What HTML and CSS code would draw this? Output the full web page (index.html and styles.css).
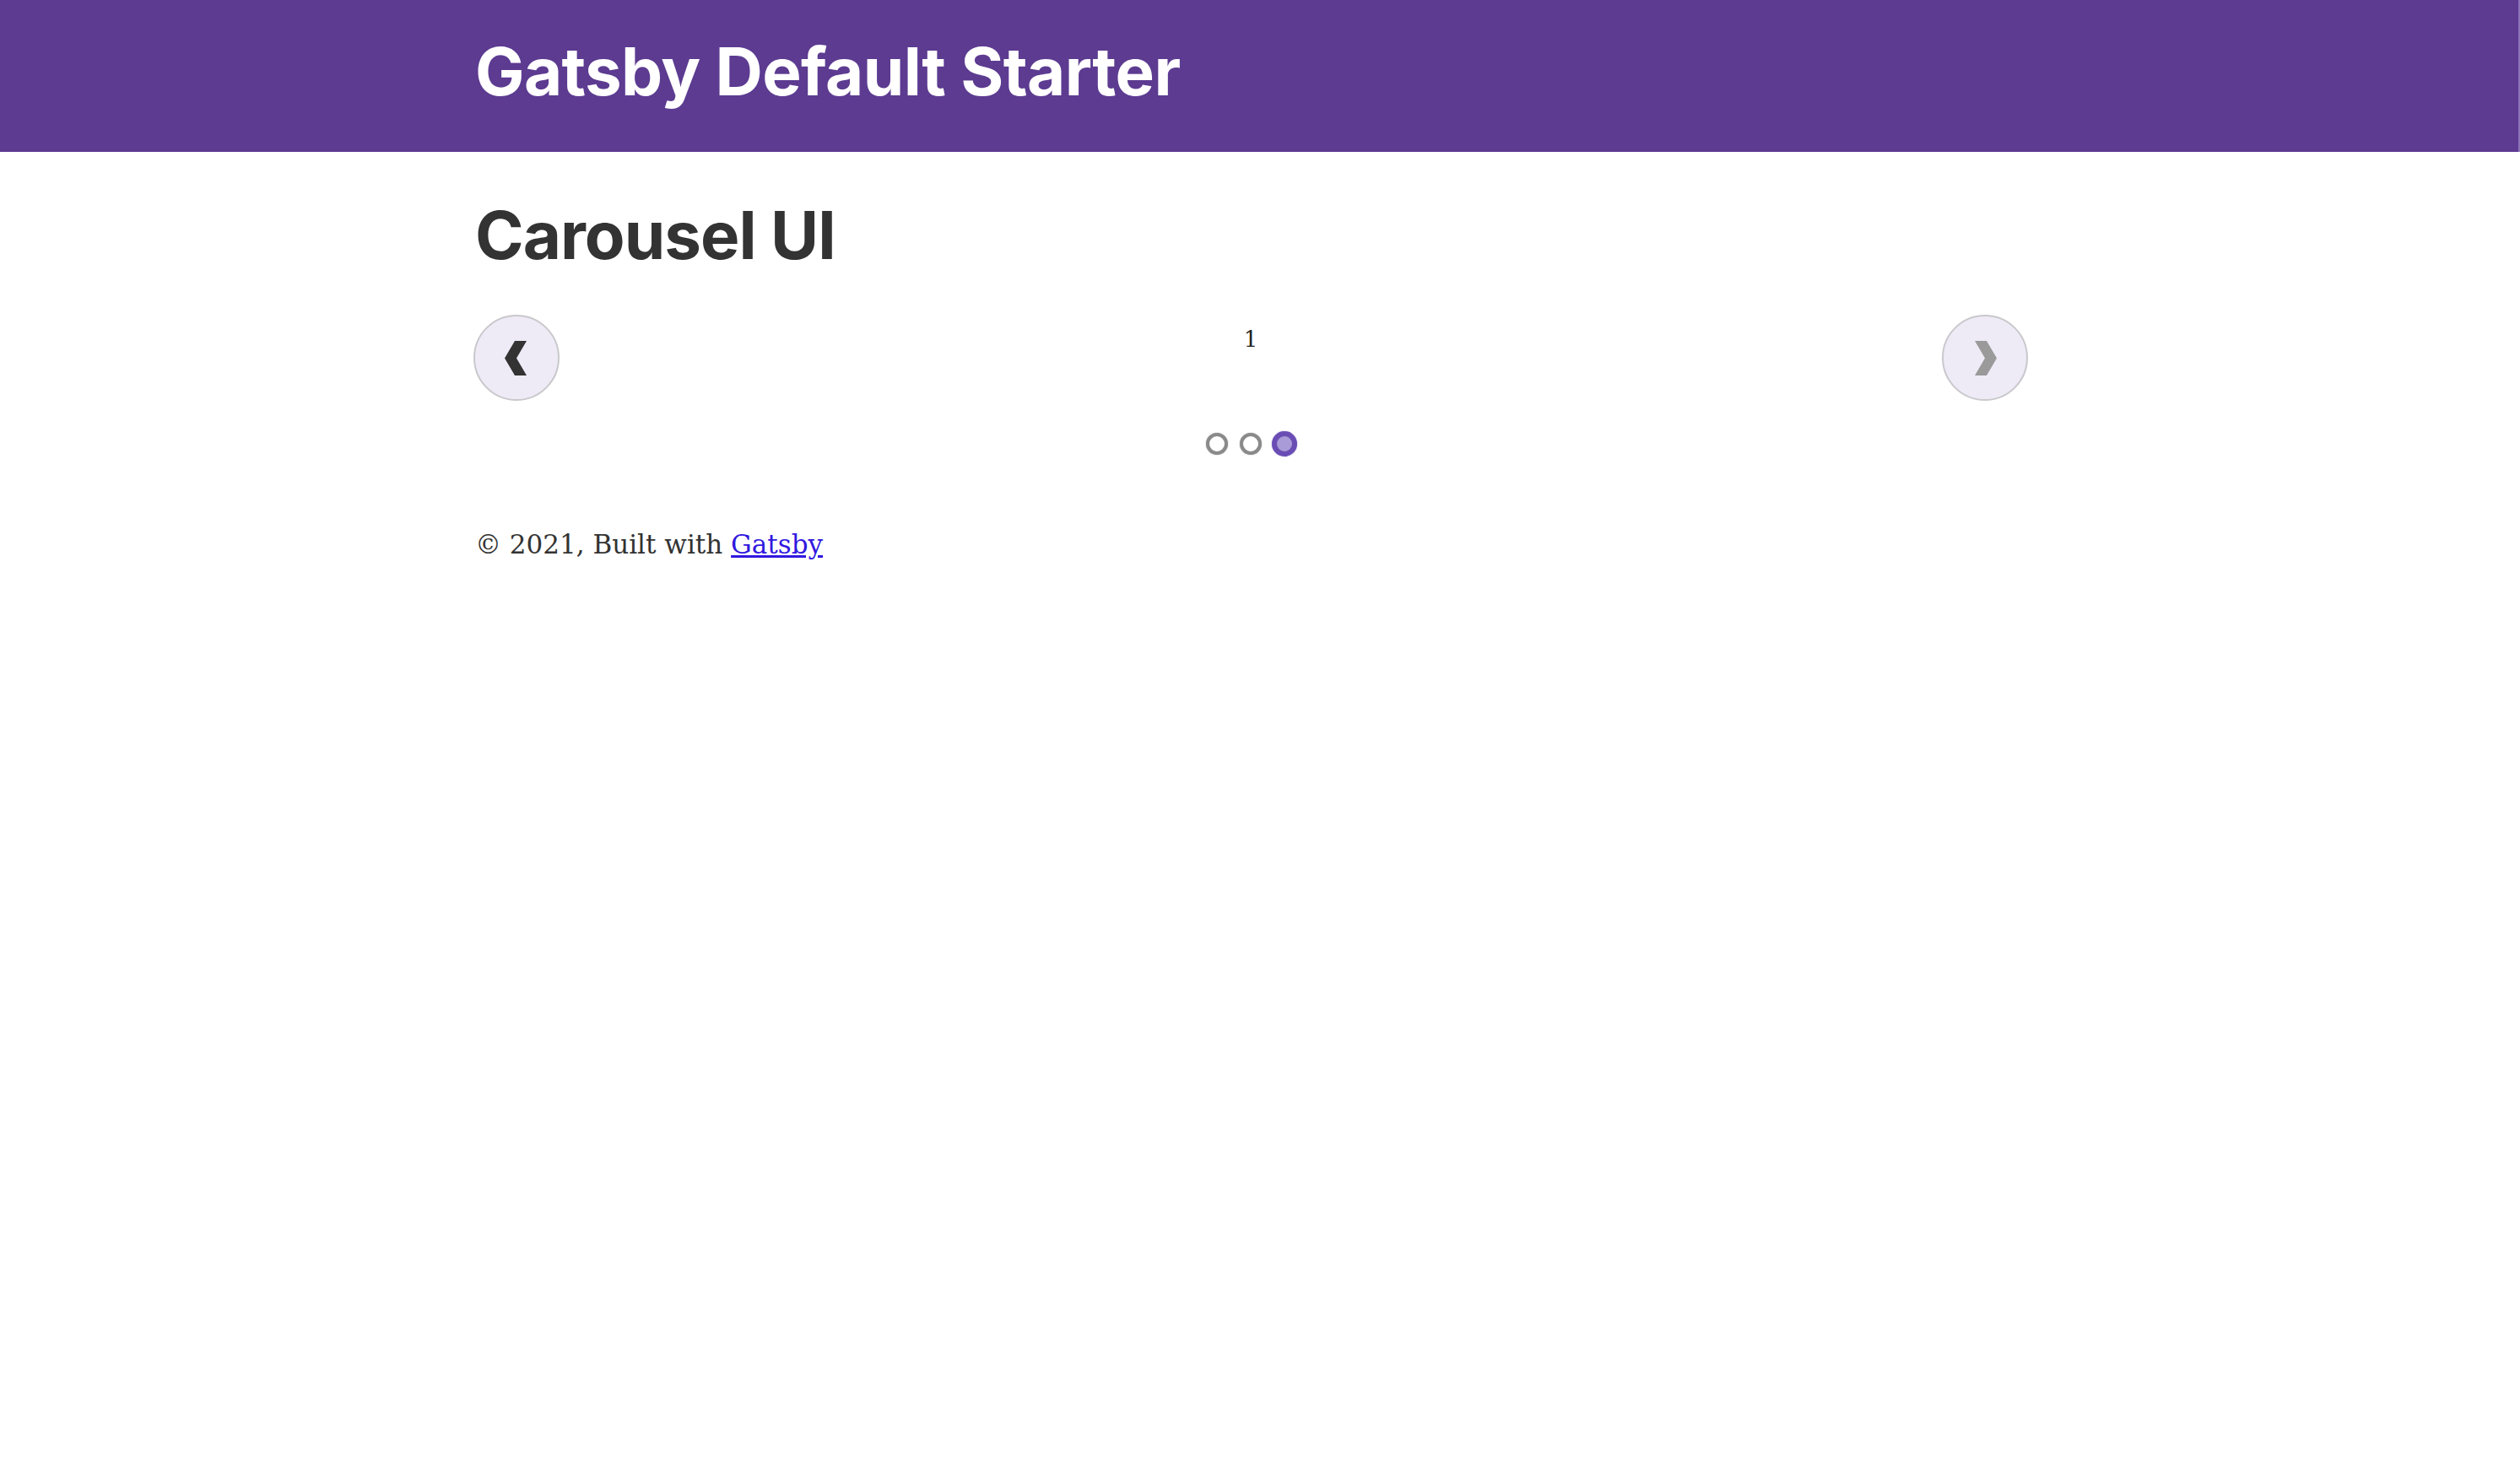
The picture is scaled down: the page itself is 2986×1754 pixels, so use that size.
FILE: index.html
```html
<!DOCTYPE html>
<html lang="en">
<head>
<meta charset="utf-8">
<title>Gatsby Default Starter</title>
<link rel="stylesheet" href="styles.css">
</head>
<body>
<header class="site-header">
  <div class="container">
    <h1 class="site-title">Gatsby Default Starter</h1>
  </div>
</header>
<div class="container">
  <main>
    <h1 class="page-title">Carousel UI</h1>
    <div class="carousel">
      <button class="nav-btn nav-prev" type="button" aria-label="Previous">
        <svg class="chev" viewBox="0 0 26 41" width="26" height="41"><polygon points="0,20.5 12,0 26,0 14,20.5 26,41 12,41"/></svg>
      </button>
      <div class="slide">1</div>
      <button class="nav-btn nav-next" type="button" aria-label="Next">
        <svg class="chev" viewBox="0 0 26 41" width="26" height="41"><polygon points="26,20.5 14,0 0,0 12,20.5 0,41 14,41"/></svg>
      </button>
    </div>
    <div class="dots">
      <span class="slot"><span class="dot"></span></span>
      <span class="slot"><span class="dot"></span></span>
      <span class="slot"><span class="dot dot-active"></span></span>
    </div>
  </main>
  <footer class="site-footer">© 2021, Built with <a href="#">Gatsby</a></footer>
</div>
</body>
</html>
```
FILE: styles.css
```css
html, body {
  margin: 0;
  padding: 0;
  background: #ffffff;
}
body {
  font-family: "DejaVu Serif", "Liberation Serif", serif;
  color: #333333;
}
.container {
  width: 1842px;
  margin-left: 561px;
}
.site-header {
  box-sizing: border-box;
  height: 180px;
  padding-top: 46px;
  background: #5c3b91;
  border-right: 2px solid #8d74b8;
}
.site-title {
  margin: 0 0 0 2px;
  font-family: Inter, "Liberation Sans", sans-serif;
  font-weight: 700;
  font-size: 78px;
  line-height: 78px;
  color: #ffffff;
  letter-spacing: -0.6px;
}
.page-title {
  margin: 60px 0 0 2px;
  font-family: Inter, "Liberation Sans", sans-serif;
  font-weight: 700;
  font-size: 78px;
  line-height: 78px;
  color: #333333;
  letter-spacing: -1px;
}
.carousel {
  display: flex;
  align-items: flex-start;
  margin-top: 55px;
  height: 102px;
}
.nav-btn {
  box-sizing: border-box;
  width: 102px;
  height: 102px;
  flex: 0 0 102px;
  border-radius: 50%;
  border: 2px solid #c9c8cc;
  background: #eeebf7;
  padding: 0;
  display: flex;
  align-items: center;
  justify-content: center;
  cursor: pointer;
}
.nav-prev .chev { fill: #333333; margin-left: -2px; }
.nav-next .chev { fill: #9a9a9a; margin-left: 2px; }
.slide {
  flex: 1;
  text-align: center;
  padding-top: 16px;
  font-size: 26px;
  line-height: 26px;
  color: #222222;
}
.dots {
  display: flex;
  justify-content: center;
  align-items: center;
  height: 40px;
  margin-top: 31px;
}
.slot {
  width: 40px;
  height: 40px;
  display: flex;
  align-items: center;
  justify-content: center;
}
.dot {
  box-sizing: border-box;
  width: 26px;
  height: 26px;
  border-radius: 50%;
  border: 4px solid #8a8a8a;
  background: #ffffff;
  box-shadow: 0 0 1.5px rgba(120,120,120,0.6);
}
.dot-active {
  width: 30px;
  height: 30px;
  border: 6px solid #6a4db4;
  background: #a99bd7;
  box-shadow: 0 0 1.5px rgba(106,77,180,0.6);
}
.site-footer {
  margin-top: 73px;
  margin-left: 2px;
  font-size: 31px;
  line-height: 52px;
  color: #333333;
}
.site-footer a {
  color: #3118df;
}
```
